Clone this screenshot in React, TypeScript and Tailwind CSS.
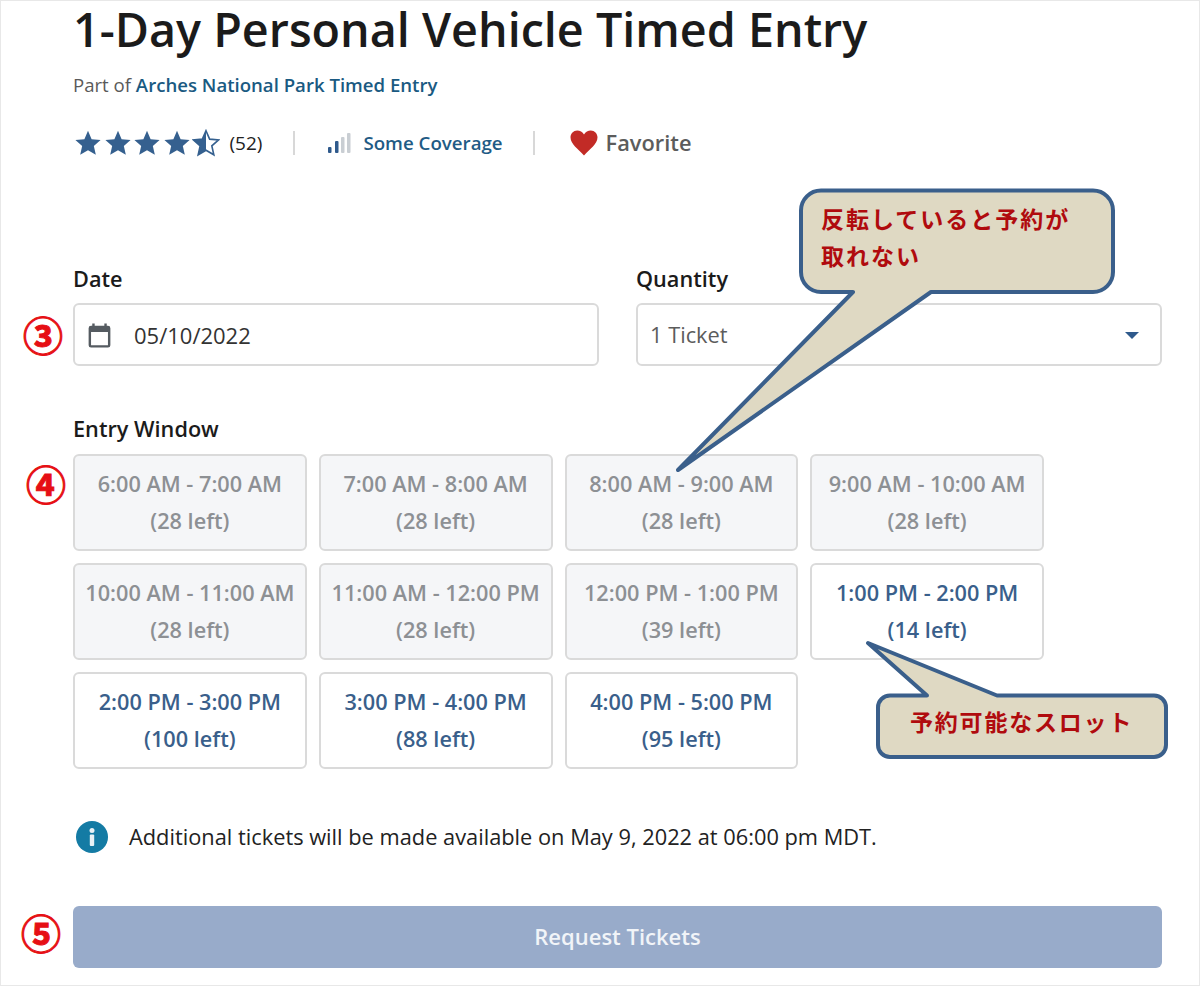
const slots = [
  { time: "6:00 AM - 7:00 AM", left: 28, open: false },
  { time: "7:00 AM - 8:00 AM", left: 28, open: false },
  { time: "8:00 AM - 9:00 AM", left: 28, open: false },
  { time: "9:00 AM - 10:00 AM", left: 28, open: false },
  { time: "10:00 AM - 11:00 AM", left: 28, open: false },
  { time: "11:00 AM - 12:00 PM", left: 28, open: false },
  { time: "12:00 PM - 1:00 PM", left: 39, open: false },
  { time: "1:00 PM - 2:00 PM", left: 14, open: true },
  { time: "2:00 PM - 3:00 PM", left: 100, open: true },
  { time: "3:00 PM - 4:00 PM", left: 88, open: true },
  { time: "4:00 PM - 5:00 PM", left: 95, open: true },
]

const STAR = "M12 1.5l3.1 7.2 7.7.7-5.8 5.1 1.7 7.6L12 18.2l-6.7 3.9L7 14.5 1.2 9.4l7.7-.7z"

function Star({ half }: { half?: boolean }) {
  return (
    <svg width="28" height="28" viewBox="0 0 24 24" className="mr-[1.5px]">
      {half ? (
        <>
          <path d={STAR} fill="none" stroke="#35608f" strokeWidth="1.4" />
          <path d="M12 1.5v16.7l-6.7 3.9L7 14.5 1.2 9.4l7.7-.7z" fill="#35608f" />
        </>
      ) : (
        <path d={STAR} fill="#35608f" />
      )}
    </svg>
  )
}

function Marker({ children, className }: { children: string; className: string }) {
  return (
    <span className={`absolute font-['Noto_Sans_CJK_JP',sans-serif] font-bold text-[40px] leading-none text-[#e60f14] [-webkit-text-stroke:1px_#e60f14] ${className}`}>
      {children}
    </span>
  )
}

export default function App() {
  return (
    <div className="relative h-[986px] w-[1200px] overflow-hidden border border-[#e8e8e8] bg-white pl-[72px] pr-[37px] font-['Open_Sans',sans-serif] text-[#1b1b1b]">
      <h1 className="text-[46.700px] font-semibold leading-[56px] whitespace-nowrap">1-Day Personal Vehicle Timed Entry</h1>
      <p className="mt-[16px] text-[18.600px] leading-6 text-[#5a5a5a]">
        Part of <a className="font-semibold text-[#1a5a82]">Arches National Park Timed Entry</a>
      </p>

      <div className="mt-[22px] flex h-[48px] items-center">
        <div className="ml-[1px] flex items-center">
          <Star /><Star /><Star /><Star /><Star half />
        </div>
        <span className="ml-[8px] text-[19px] text-[#222]">(52)</span>
        <span className="ml-[31px] h-[24px] w-[2px] bg-[#d8d8d8]" />
        <svg width="26" height="24" viewBox="0 0 26 24" className="ml-[32px]">
          <rect x="1" y="16" width="3.500" height="6" rx="1" fill="#2f5a8c" />
          <rect x="8" y="10" width="3.500" height="12" rx="1" fill="#2f5a8c" />
          <rect x="14" y="6" width="3.500" height="16" rx="1" fill="#c9ced3" />
          <rect x="20" y="2" width="3.500" height="20" rx="1" fill="#c9ced3" />
        </svg>
        <span className="ml-[10px] text-[18.700px] font-semibold text-[#1f5b85]">Some Coverage</span>
        <span className="ml-[30px] h-[24px] w-[2px] bg-[#d8d8d8]" />
        <svg width="30" height="28" viewBox="0 0 30 28" className="ml-[34px]">
          <path d="M15 26.500C9 20 1.500 15 1.500 8.300 1.500 4.500 4.500 1.500 8.200 1.500c2.800 0 5.300 1.500 6.800 4 1.500-2.500 4-4 6.800-4 3.700 0 6.700 3 6.700 6.800C28.500 15 21 20 15 26.500z" fill="#c22b26" />
        </svg>
        <span className="ml-[7px] text-[21.800px] font-semibold text-[#5c5c5c]">Favorite</span>
      </div>

      <div className="mt-[98px] grid grid-cols-2 gap-x-[37px]">
        <div>
          <label className="block text-[21.700px] font-semibold leading-[28px]">Date</label>
          <div className="mt-[10px] flex h-[63px] items-center rounded-md border-2 border-[#dadada] pl-[10px] pt-[2px]">
            <svg width="29" height="29" viewBox="0 0 24 24" fill="#555b61">
              <path d="M19 4h-1V2h-2v2H8V2H6v2H5a2 2 0 0 0-2 2v14a2 2 0 0 0 2 2h14a2 2 0 0 0 2-2V6a2 2 0 0 0-2-2zm0 16H5V9h14z" />
            </svg>
            <span className="ml-[20px] text-[22px] text-[#333]">05/10/2022</span>
          </div>
        </div>
        <div>
          <label className="block text-[21.700px] font-semibold leading-[28px]">Quantity</label>
          <div className="mt-[10px] flex h-[63px] items-center justify-between rounded-md border-2 border-[#dadada] pl-[12px] pr-[21px] pt-[2px]">
            <span className="text-[21.800px] text-[#5c5c5c]">1 Ticket</span>
            <svg width="14" height="7" viewBox="0 0 14 7"><path d="M0 0h14L7 7z" fill="#2f5a8c" /></svg>
          </div>
        </div>
      </div>

      <div className="mt-[49px] text-[21.700px] font-semibold leading-[28px]">Entry Window</div>
      <div className="mt-[11px] grid w-[971px] grid-cols-4 gap-x-[12px] gap-y-[12px]">
        {slots.map((s) => (
          <button
            key={s.time}
            className={`flex h-[97px] flex-col items-center justify-center rounded-md border-2 border-[#dadada] pb-[2px] text-[21.700px] font-semibold leading-[37px] ${s.open ? "bg-white text-[#3a5f8b]" : "bg-[#f5f6f8] text-[#8d9094]"}`}
          >
            <span className="whitespace-nowrap">{s.time}</span>
            <span>({s.left} left)</span>
          </button>
        ))}
      </div>

      <div className="mt-[51px] flex items-center">
        <svg width="34" height="34" viewBox="0 0 34 34" className="ml-[2px]">
          <circle cx="17" cy="17" r="16" fill="#147ba4" />
          <circle cx="17" cy="10.500" r="2.500" fill="#e8f2f6" />
          <rect x="14.800" y="14.500" width="4.400" height="11.500" rx="1" fill="#e8f2f6" />
        </svg>
        <span className="ml-[20px] text-[21.800px] text-[#222]">Additional tickets will be made available on May 9, 2022 at 06:00 pm MDT.</span>
      </div>

      <button className="mt-[52px] flex h-[62px] w-full items-center justify-center rounded-md bg-[#98abca] pb-[2px] text-[22px] font-semibold text-[#f1f4f8]">
        Request Tickets
      </button>

      <Marker className="left-[22px] top-[313px]">③</Marker>
      <Marker className="left-[25px] top-[462px]">④</Marker>
      <Marker className="left-[20px] top-[911px]">⑤</Marker>

      <svg width="1200" height="986" className="pointer-events-none absolute left-[-1px] top-[-1px]">
        <path
          d="M821 190.500H1093a20 20 0 0 1 20 20V272a20 20 0 0 1-20 20H931L678 470 853 292H821a20 20 0 0 1-20-20V210.500a20 20 0 0 1 20-20z"
          fill="#dfd9c3" stroke="#3a5f8b" strokeWidth="4" strokeLinejoin="round"
        />
        <path
          d="M890 695.500H927L868 643 997 695.500H1154a12 12 0 0 1 12 12V745a12 12 0 0 1-12 12H890a12 12 0 0 1-12-12V707.500a12 12 0 0 1 12-12z"
          fill="#dfd9c3" stroke="#3a5f8b" strokeWidth="4" strokeLinejoin="round"
        />
      </svg>
      <div className="absolute left-[820px] top-[199px] font-['Noto_Sans_CJK_JP',sans-serif] text-[23px] font-bold leading-[37px] tracking-[2px] text-[#b00b0e]">
        反転していると予約が<br />取れない
      </div>
      <div className="absolute left-[909px] top-[704px] font-['Noto_Sans_CJK_JP',sans-serif] text-[23px] font-bold leading-[33px] tracking-[1.800px] text-[#b00b0e]">
        予約可能なスロット
      </div>
    </div>
  )
}
